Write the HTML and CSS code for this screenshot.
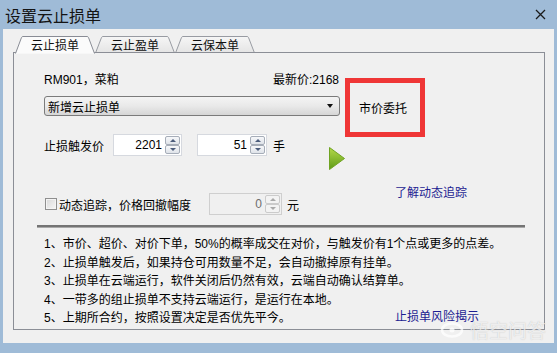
FILE: index.html
```html
<!DOCTYPE html>
<html lang="zh-CN">
<head>
<meta charset="utf-8">
<title>设置云止损单</title>
<link rel="stylesheet" href="styles.css">
</head>
<body>
<div class="window">
  <div class="titlebar">
    <span class="title">设置云止损单</span>
    <svg class="close" width="11" height="11" viewBox="0 0 11 11"><path d="M1 1 L10 10 M10 1 L1 10" stroke="#1b1b1b" stroke-width="1.3" fill="none"/></svg>
  </div>
  <div class="client">
    <div class="tabs">
      <div class="tab active">云止损单</div>
      <div class="tab">云止盈单</div>
      <div class="tab">云保本单</div>
    </div>
    <div class="panel">
      <div class="main">
        <div class="row1"><span>RM901，菜粕</span><span>最新价:2168</span></div>
        <div class="combo"><span>新增云止损单</span><i class="caret"></i></div>
        <div class="row3">
          <span class="label">止损触发价</span>
          <div class="spin">
            <span class="val">2201</span>
            <span class="btns"><b class="up"></b><b class="down"></b></span>
          </div>
          <div class="spin spin2">
            <span class="val">51</span>
            <span class="btns"><b class="up"></b><b class="down"></b></span>
          </div>
          <span class="unit">手</span>
          <svg class="go" width="16" height="23" viewBox="0 0 16 23">
            <defs><linearGradient id="gg" x1="0" y1="0" x2="0" y2="1"><stop offset="0" stop-color="#b5d94a"/><stop offset="1" stop-color="#5e9b17"/></linearGradient></defs>
            <path d="M0.5 0.5 L15.5 11.5 L0.5 22.5 Z" fill="url(#gg)" stroke="#6fa322" stroke-width="1"/>
          </svg>
        </div>
        <div class="row4">
          <span class="check"></span>
          <span class="ctext">动态追踪，价格回撤幅度</span>
          <div class="spin spin3 disabled">
            <span class="val">0</span>
            <span class="btns"><b class="up"></b><b class="down"></b></span>
          </div>
          <span class="unit2">元</span>
          <a class="link link1">了解动态追踪</a>
        </div>
      </div>
      <div class="sep"></div>
      <div class="notes">
        <div class="note">1、市价、超价、对价下单，50%的概率成交在对价，与触发价有1个点或更多的点差。</div>
        <div class="note">2、止损单触发后，如果持仓可用数量不足，会自动撤掉原有挂单。</div>
        <div class="note">3、止损单在云端运行，软件关闭后仍然有效，云端自动确认结算单。</div>
        <div class="note">4、一带多的组止损单不支持云端运行，是运行在本地。</div>
        <div class="note last"><span class="ntext">5、上期所合约，按照设置决定是否优先平今。</span><a class="link">止损单风险揭示</a></div>
      </div>
      <div class="market">市价委托</div>
    </div>
  </div>
  <div class="watermark">
    <svg width="24" height="18" viewBox="0 0 24 18"><ellipse cx="12" cy="9" rx="10" ry="6.5" fill="none" stroke="rgba(255,255,255,0.75)" stroke-width="2.5"/><circle cx="12" cy="9" r="2.5" fill="rgba(255,255,255,0.75)"/></svg>
    <span>悟空问答</span>
  </div>
</div>
</body>
</html>
```

FILE: styles.css
```css
* { box-sizing: border-box; }
html, body { margin: 0; padding: 0; }
body {
  width: 557px;
  height: 353px;
  overflow: hidden;
  background: #9fbbd7;
  font-family: "Liberation Sans", "Noto Sans CJK SC", sans-serif;
  font-size: 12px;
  color: #000;
}
.window {
  position: relative;
  width: 557px;
  height: 353px;
  display: flex;
  flex-direction: column;
}
.titlebar {
  height: 29px;
  display: flex;
  align-items: center;
  justify-content: space-between;
  padding: 1px 11px 0 5px;
}
.title {
  font-family: "Noto Sans CJK SC", sans-serif;
  font-size: 16px;
  color: #141414;
  line-height: 20px;
}
.close { margin-top: -2px; }
.client {
  flex: 1;
  margin: 0 3px 10px 3px;
  background: #f0f0f0;
  padding: 7px 9px 13px 10px;
  display: flex;
  flex-direction: column;
}
.tabs {
  height: 17px;
  display: flex;
  padding-left: 2px;
}
.tab {
  width: 80px;
  height: 17px;
  line-height: 18px;
  text-align: center;
  font-family: "Noto Sans CJK SC", sans-serif;
  font-size: 12px;
  color: #111;
  background: url("data:image/svg+xml;utf8,<svg xmlns='http://www.w3.org/2000/svg' width='80' height='17'><defs><linearGradient id='t' x1='0' y1='0' x2='0' y2='1'><stop offset='0' stop-color='%23f6f6f6'/><stop offset='1' stop-color='%23e4e4e4'/></linearGradient></defs><path d='M0.5 17 L6.5 1.5 Q7 0.5 8 0.5 L72 0.5 Q73 0.5 73.5 1.5 L79.5 17' fill='url(%23t)' stroke='%23989ba2'/></svg>") no-repeat;
}
.tab.active {
  position: relative;
  z-index: 1;
  height: 18px;
  background: url("data:image/svg+xml;utf8,<svg xmlns='http://www.w3.org/2000/svg' width='80' height='18'><path d='M0.5 17.5 L6.5 1.5 Q7 0.5 8 0.5 L72 0.5 Q73 0.5 73.5 1.5 L79.5 17.5' fill='%23fbfbfb' stroke='%23898c95'/><rect x='1' y='17' width='78' height='1' fill='%23f7f7f7'/></svg>") no-repeat;
}
.panel {
  flex: 1;
  position: relative;
  border: 1px solid #8b8e96;
  margin-top: -1px;
}
.main { padding-left: 30px; }
.row1 {
  margin-top: 20px;
  width: 295px;
  height: 14px;
  line-height: 14px;
  display: flex;
  justify-content: space-between;
}
.combo {
  margin-top: 9px;
  width: 296px;
  height: 20px;
  border: 1px solid #7b7b7b;
  border-radius: 3px;
  background: linear-gradient(#f4f4f4, #e9e9e9 50%, #d6d6d6);
  display: flex;
  align-items: center;
  justify-content: space-between;
  padding: 0 6px 0 3px;
  font-family: "Noto Sans CJK SC", sans-serif;
  font-size: 12px;
}
.caret {
  width: 0;
  height: 0;
  border-left: 3.5px solid transparent;
  border-right: 3.5px solid transparent;
  border-top: 4px solid #111;
}
.row3 {
  margin-top: 18px;
  height: 22px;
  display: flex;
  align-items: center;
}
.label { width: 69px; }
.spin {
  width: 69px;
  height: 22px;
  border: 1px solid #d6d9df;
  background: #fff;
  display: flex;
  align-items: center;
  padding: 1px 0 1px 0;
}
.spin2 { width: 70px; margin-left: 15px; }
.val {
  flex: 1;
  text-align: right;
  padding-right: 3px;
  line-height: 18px;
}
.btns {
  width: 15px;
  height: 18px;
  display: flex;
  flex-direction: column;
  gap: 0;
  margin-right: 1px;
}
.btns b {
  flex: 1;
  border: 1px solid #a6adb8;
  border-radius: 2px;
  background: linear-gradient(#f7f8fa, #dfe3e9);
  display: flex;
  align-items: center;
  justify-content: center;
}
.btns b::after {
  content: "";
  width: 0;
  height: 0;
  border-left: 3px solid transparent;
  border-right: 3px solid transparent;
}
.btns .up::after { border-bottom: 3px solid #4c5d7c; }
.btns .down::after { border-top: 3px solid #4c5d7c; }
.unit { margin-left: 6px; font-family: "Noto Sans CJK SC", sans-serif; }
.go { align-self: flex-start; margin-top: 13px; margin-left: 44px; }
.row4 {
  margin-top: 37px;
  height: 22px;
  display: flex;
  align-items: center;
}
.check {
  width: 12px;
  height: 12px;
  margin-left: 1px;
  border: 1px solid #8f8f8f;
  background: linear-gradient(135deg, #d8d8d8, #f6f6f6);
  box-shadow: inset 0 0 0 1px #f4f4f4;
}
.ctext { margin-left: 2px; font-family: "Noto Sans CJK SC", sans-serif; }
.spin3 { width: 73px; margin-left: 18px; }
.disabled { background: #f0f0f0; border-color: #cfcfcf; }
.disabled .val { color: #6d6d6d; }
.disabled .btns b { border-color: #cbcbcb; background: #f3f3f3; }
.disabled .btns .up::after { border-bottom-color: #a9a9a9; }
.disabled .btns .down::after { border-top-color: #a9a9a9; }
.unit2 { margin-left: 5px; font-family: "Noto Sans CJK SC", sans-serif; }
.link {
  color: #1d1d92;
  font-family: "Noto Sans CJK SC", sans-serif;
  line-height: 14px;
}
.link1 { align-self: flex-start; margin-top: -8px; margin-left: 96px; }
.sep {
  margin-top: 10px;
  margin-left: 23px;
  width: 488px;
  height: 3px;
  background: #747474;
  border-bottom: 1px solid #a9a9a9;
}
.notes {
  margin-top: 7px;
  padding-left: 30px;
}
.note {
  height: 18.5px;
  line-height: 18.5px;
  white-space: nowrap;
  font-family: "Liberation Sans", "Noto Sans CJK SC", sans-serif;
}
.note.last { display: flex; }
.ntext { width: 351px; }
.market {
  position: absolute;
  left: 331px;
  top: 25px;
  width: 80px;
  height: 59px;
  border: 5px solid #ef3636;
  padding-left: 9px;
  display: flex;
  align-items: center;
  font-family: "Noto Sans CJK SC", sans-serif;
  font-size: 12px;
}
.watermark {
  position: absolute;
  right: 11px;
  bottom: 12px;
  display: flex;
  align-items: center;
  gap: 6px;
  font-family: "Noto Sans CJK SC", sans-serif;
  font-size: 19px;
  line-height: 22px;
  color: rgba(255, 255, 255, 0.72);
  text-shadow: 0 0 1px rgba(90, 90, 90, 0.35);
}
```
